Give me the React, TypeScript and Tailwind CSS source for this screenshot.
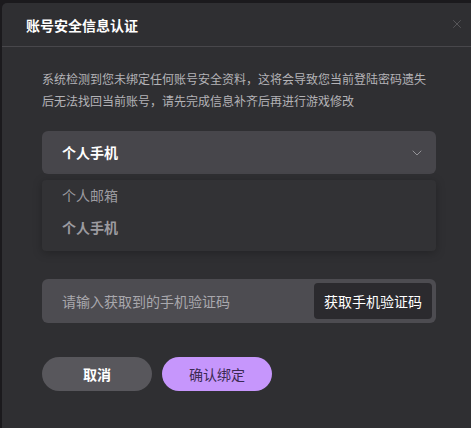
import { ChevronDown, X } from "lucide-react";

const App = () => {
  return (
    <div
      className="w-[471px] h-[428px] overflow-hidden bg-[#1b1a1d] pl-[2px] pt-[3px]"
      style={{ fontFamily: '"Noto Sans CJK SC", "Noto Sans", sans-serif' }}
    >
      <div className="relative h-full w-full rounded-tl-[5px] bg-[#2f2f32]">
        {/* Header */}
        <div className="flex h-[44px] items-center border-b border-[#48474b] pl-[24px]">
          <h1 className="text-[14px] font-bold leading-none text-white">账号安全信息认证</h1>
          <X className="absolute right-[7px] top-[14px] h-[14px] w-[14px] text-[#5b5a5e]" strokeWidth={1.5} />
        </div>

        {/* Body */}
        <div className="pl-[40px] pr-[35px] pt-[21px]">
          <p className="text-[12px] leading-[22px] text-[#b4b3b7]">
            系统检测到您未绑定任何账号安全资料，这将会导致您当前登陆密码遗失后无法找回当前账号，请先完成信息补齐后再进行游戏修改
          </p>

          {/* Select */}
          <div className="mt-[19px] flex h-[43px] items-center justify-between rounded-[6px] bg-[#47464b] pl-[20px] pr-[11px]">
            <span className="text-[14px] font-bold text-white">个人手机</span>
            <ChevronDown className="h-[16px] w-[16px] text-[#a3a2a7]" strokeWidth={1.25} />
          </div>

          {/* Dropdown */}
          <div className="mt-[6px] flex h-[71px] flex-col gap-[12px] rounded-[4px] bg-[#323235] pl-[20px] pt-[5px] shadow-[0_2px_10px_rgba(0,0,0,0.25)]">
            <span className="text-[14px] leading-[20px] text-[#9c9ba0]">个人邮箱</span>
            <span className="text-[14px] font-bold leading-[20px] text-[#9c9ba0]">个人手机</span>
          </div>

          {/* Code input */}
          <div className="mt-[28px] flex h-[44px] items-center justify-between rounded-[6px] bg-[#4d4c51] pl-[20px] pr-[4px]">
            <span className="text-[14px] text-[#a9a8ad]">请输入获取到的手机验证码</span>
            <button className="h-[36px] rounded-[4px] bg-[#2b2a2e] px-[10px] text-[14px] text-white">
              获取手机验证码
            </button>
          </div>

          {/* Actions */}
          <div className="mt-[34px] flex gap-[10px]">
            <button className="h-[34px] w-[110px] rounded-full bg-[#58575c] text-[14px] font-bold text-white">
              取消
            </button>
            <button className="h-[34px] w-[110px] rounded-full bg-[#c696fc] text-[14px] text-[#3b2a52]">
              确认绑定
            </button>
          </div>
        </div>
      </div>
    </div>
  );
};

export default App;
